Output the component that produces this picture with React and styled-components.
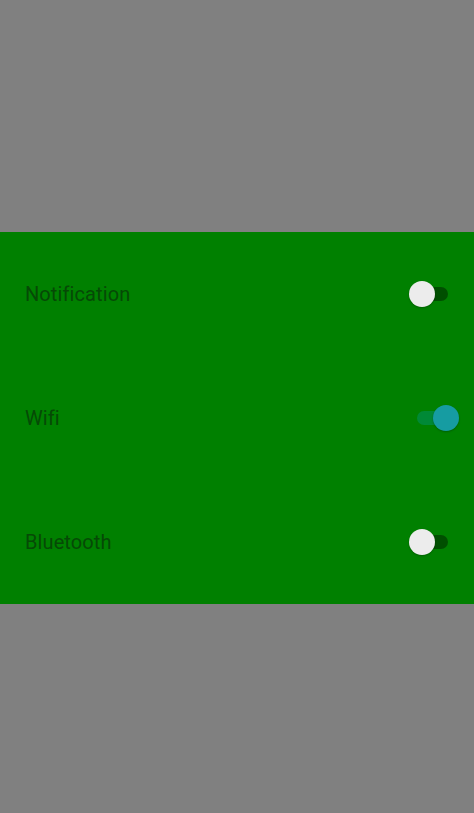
import React, { useState } from "react";
import styled, { createGlobalStyle } from "styled-components";

const Global = createGlobalStyle`
  html, body { margin: 0; padding: 0; height: 100%; }
  body { background: #808080; font-family: Roboto, "Noto Sans", sans-serif; }
  #root { height: 100%; }
`;

const Screen = styled.div`
  height: 813px;
  display: flex;
  flex-direction: column;
  justify-content: center;
  background: #808080;
`;

const Panel = styled.div`
  background: #008000;
  display: flex;
  flex-direction: column;
  margin-top: 22px;
  height: 372px;
  box-sizing: border-box;
`;

const Row = styled.div`
  flex: 1;
  display: flex;
  align-items: center;
  justify-content: space-between;
  padding: 0 13px 0 25px;
`;

const Label = styled.span`
  font-size: 20px;
  color: #064906;
  letter-spacing: 0.1px;
`;

const SwitchBox = styled.button`
  position: relative;
  width: 52px;
  height: 28px;
  border: none;
  background: transparent;
  padding: 0;
  cursor: pointer;
`;

const Track = styled.span`
  position: absolute;
  left: 8px;
  right: 13px;
  top: 7px;
  height: 14px;
  border-radius: 7px;
  background: ${(p) => (p.$on ? "rgba(0, 150, 136, 0.4)" : "rgba(0, 0, 0, 0.38)")};
`;

const Thumb = styled.span`
  position: absolute;
  top: 1px;
  left: ${(p) => (p.$on ? "24px" : "0px")};
  width: 26px;
  height: 26px;
  border-radius: 50%;
  background: ${(p) => (p.$on ? "#169ca2" : "#ececec")};
  box-shadow: 0 1px 2px rgba(0, 0, 0, 0.25);
`;

function Switch({ on, onToggle }) {
  return (
    <SwitchBox onClick={onToggle} aria-pressed={on}>
      <Track $on={on} />
      <Thumb $on={on} />
    </SwitchBox>
  );
}

export default function App() {
  const [state, setState] = useState({ Notification: false, Wifi: true, Bluetooth: false });
  return (
    <>
      <Global />
      <Screen>
        <Panel>
          {Object.keys(state).map((k) => (
            <Row key={k}>
              <Label>{k}</Label>
              <Switch on={state[k]} onToggle={() => setState((s) => ({ ...s, [k]: !s[k] }))} />
            </Row>
          ))}
        </Panel>
      </Screen>
    </>
  );
}
